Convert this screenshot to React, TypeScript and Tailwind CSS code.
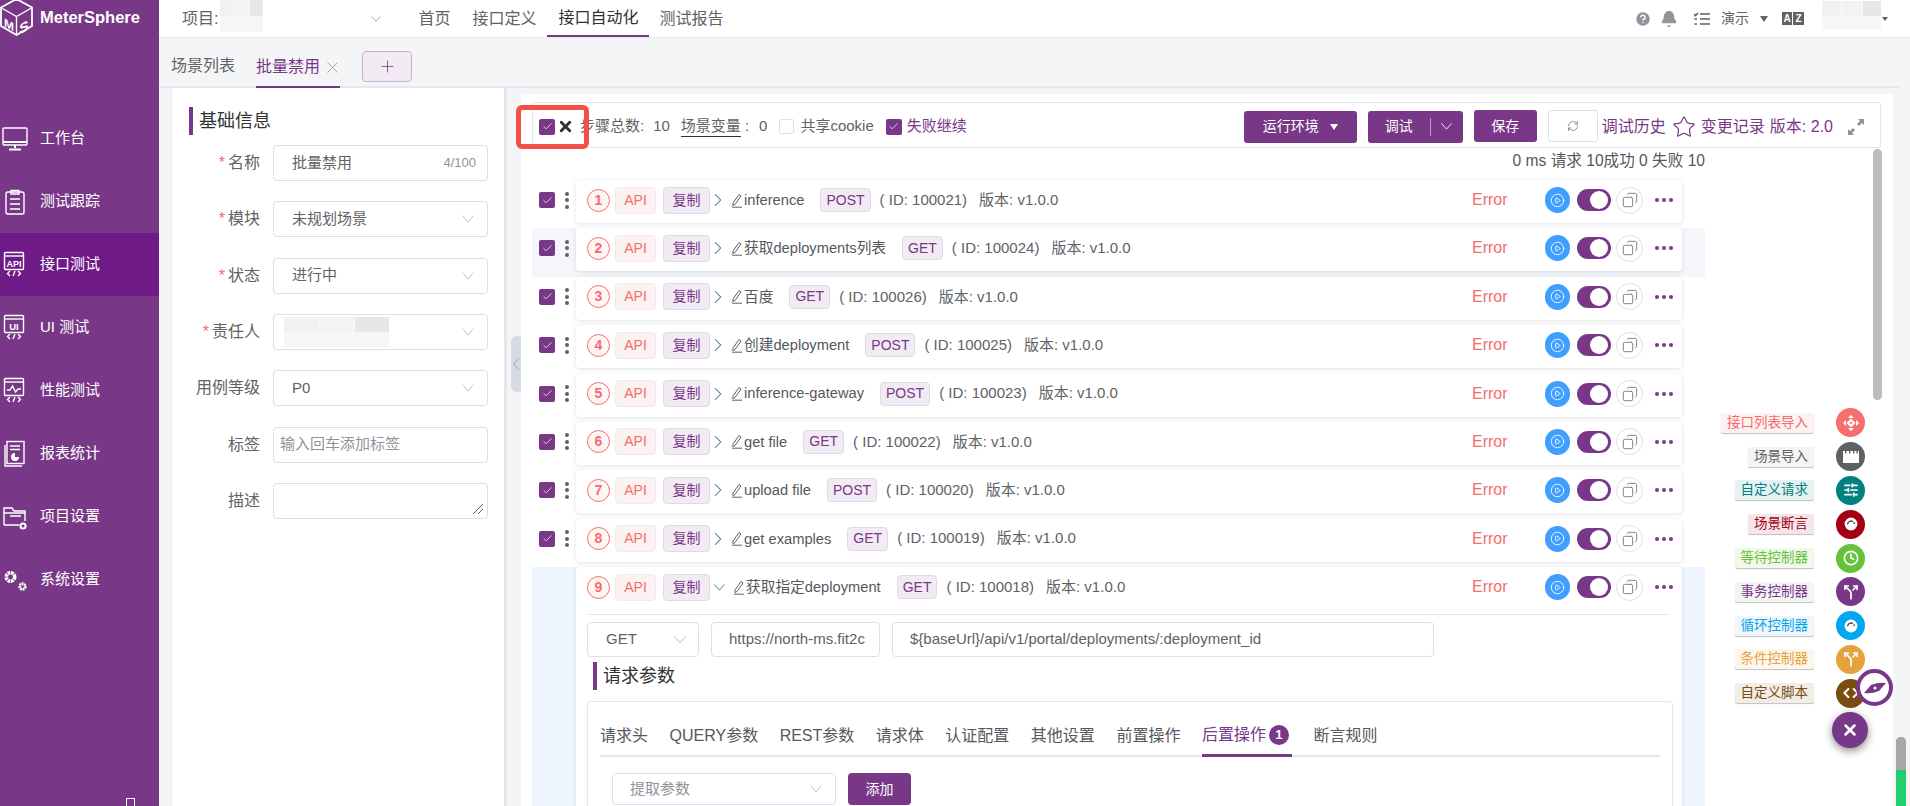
import React from "react";
import {
  Bell,
  Check,
  ChevronLeft,
  ChevronRight,
  CircleHelp,
  CirclePlay,
  Clock,
  Code,
  Copy,
  Plus,
  RefreshCw,
  SlidersHorizontal,
  Split,
  Star,
  X,
} from "lucide-react";

const navItems = [
  { label: "工作台", icon: "monitor" },
  { label: "测试跟踪", icon: "track" },
  { label: "接口测试", icon: "api", active: true },
  { label: "UI 测试", icon: "ui" },
  { label: "性能测试", icon: "perf" },
  { label: "报表统计", icon: "report" },
  { label: "项目设置", icon: "folder" },
  { label: "系统设置", icon: "gears" },
];

const steps = [
  { no: 1, name: "inference", method: "POST", id: "100021" },
  { no: 2, name: "获取deployments列表", method: "GET", id: "100024", hover: true },
  { no: 3, name: "百度", method: "GET", id: "100026" },
  { no: 4, name: "创建deployment", method: "POST", id: "100025" },
  { no: 5, name: "inference-gateway", method: "POST", id: "100023" },
  { no: 6, name: "get file", method: "GET", id: "100022" },
  { no: 7, name: "upload file", method: "POST", id: "100020" },
  { no: 8, name: "get examples", method: "GET", id: "100019" },
];

const requestTabs = ["请求头", "QUERY参数", "REST参数", "请求体", "认证配置", "其他设置", "前置操作"];

const floatActions = [
  { label: "接口列表导入", text: "text-[#f56c6c]", bg: "bg-[#fdf2f2]", circle: "bg-[#f76e6e]", icon: "move" },
  { label: "场景导入", text: "text-[#606266]", bg: "bg-[#f4f4f5]", circle: "bg-[#5f6064]", icon: "film" },
  { label: "自定义请求", text: "text-[#008080]", bg: "bg-[#e6f2f2]", circle: "bg-[#008080]", icon: "sliders" },
  { label: "场景断言", text: "text-[#a30014]", bg: "bg-[#f6e5e7]", circle: "bg-[#a30014]", icon: "gauge" },
  { label: "等待控制器", text: "text-[#67c23a]", bg: "bg-[#f0f9eb]", circle: "bg-[#67c23a]", icon: "clock" },
  { label: "事务控制器", text: "text-[#783887]", bg: "bg-[#f4f4f5]", circle: "bg-[#783887]", icon: "split" },
  { label: "循环控制器", text: "text-[#02a7f0]", bg: "bg-[#f2f6fa]", circle: "bg-[#02a7f0]", icon: "gauge" },
  { label: "条件控制器", text: "text-[#e6a23c]", bg: "bg-[#fdf6ec]", circle: "bg-[#e6a23c]", icon: "split" },
  { label: "自定义脚本", text: "text-[#7b4d12]", bg: "bg-[#f2ede7]", circle: "bg-[#7b4d12]", icon: "code" },
];

function NavIcon({ name }: { name: string }) {
  const frame = (
    <>
      <rect x="2.5" y="1.5" width="19" height="17" rx="1" />
      <path d="M2.5 5h19" />
      <path d="M8 25l-2.5-2.5L8 20M16 25l2.5-2.5L16 20M13 20l-2 5" />
    </>
  );
  return (
    <svg viewBox="0 0 26 28" fill="none" stroke="white" strokeWidth="1.4" className="w-[26px] h-[28px]">
      {name === "monitor" && (
        <>
          <rect x="1" y="3" width="24" height="17" rx="1" />
          <path d="M1 17h24M13 20v3M7 24.5h12" strokeWidth="2" />
        </>
      )}
      {name === "track" && (
        <>
          <rect x="4" y="4" width="18" height="22" rx="2" />
          <path d="M9 2.5h8v3.5H9zM8 11h10M8 16h10M8 21h10" />
        </>
      )}
      {name === "api" && (
        <>
          {frame}
          <text x="12" y="15.5" textAnchor="middle" fill="white" stroke="none" fontSize="9" fontWeight="700">API</text>
        </>
      )}
      {name === "ui" && (
        <>
          {frame}
          <text x="12" y="15.5" textAnchor="middle" fill="white" stroke="none" fontSize="9.5" fontWeight="700">UI</text>
        </>
      )}
      {name === "perf" && (
        <>
          {frame}
          <path d="M5 13l3 0 2.5-4 3 6 2.5-3 3 0" />
        </>
      )}
      {name === "report" && (
        <>
          <rect x="5" y="1.5" width="17" height="22" />
          <path d="M3 5v21h17M8 6h10M8 9.5h10" />
          <path d="M13 13a4 4 0 1 0 4 4h-4z" fill="white" stroke="none" />
        </>
      )}
      {name === "folder" && (
        <>
          <path d="M2 22V5h8l2 3h11v10M2 22h15" />
          <path d="M8 13h11M2 10h21" />
          <circle cx="21" cy="23" r="2.6" strokeWidth="2" />
        </>
      )}
      {name === "gears" && (
        <>
          <circle cx="8.5" cy="11" r="4.2" strokeWidth="3.6" strokeDasharray="2.6 0.7" />
          <circle cx="20.5" cy="20.5" r="2.8" strokeWidth="2.8" strokeDasharray="1.8 0.6" />
        </>
      )}
    </svg>
  );
}

function Logo() {
  return (
    <svg viewBox="0 0 33 36" className="w-[33px] h-[36px]" fill="none" stroke="white">
      <path d="M16.5 -1L32 7.5V26L16.5 35L1 26V7.5Z" strokeWidth="1.8" />
      <path d="M1.5 8l15 8.5L31.5 8M16.5 16.5V34" strokeWidth="1.4" />
      <text x="0" y="0" transform="translate(9 29) skewY(28)" textAnchor="middle" fill="white" stroke="none" fontSize="12" fontWeight="700">M</text>
      <text x="0" y="0" transform="translate(24 32) skewY(-28)" textAnchor="middle" fill="white" stroke="none" fontSize="14" fontWeight="700">S</text>
    </svg>
  );
}

function Caret({ className = "w-[12px] h-[8px]", stroke = "#c0c4cc" }: { className?: string; stroke?: string }) {
  return (
    <svg viewBox="0 0 12 8" className={`shrink-0 ${className}`} fill="none" stroke={stroke} strokeWidth="1" preserveAspectRatio="none">
      <path d="M0.5 0.5L6 7L11.5 0.5" />
    </svg>
  );
}

function CheckMark() {
  return (
    <span className="w-[16px] h-[16px] rounded-[2px] bg-[#783887] flex items-center justify-center shrink-0">
      <Check className="w-[11px] h-[11px] text-white" strokeWidth={1.6} />
    </span>
  );
}

function Kebab() {
  return (
    <span className="flex flex-col gap-[2.5px] w-[4px] shrink-0">
      <span className="w-[4px] h-[4px] rounded-full bg-[#606266]" />
      <span className="w-[4px] h-[4px] rounded-full bg-[#606266]" />
      <span className="w-[4px] h-[4px] rounded-full bg-[#606266]" />
    </span>
  );
}

function PencilMark() {
  return (
    <svg viewBox="0 0 12 15" fill="none" stroke="#606266" strokeWidth="1" className="w-[12px] h-[15px] shrink-0">
      <path d="M2 10L8 1.5l2 1.5-6 8.5-2.2 1zM1 14.2h10" />
    </svg>
  );
}

function Tag({ children, className }: { children: React.ReactNode; className: string }) {
  return (
    <span className={`flex items-center justify-center rounded-[4px] border shrink-0 ${className}`}>{children}</span>
  );
}

function StepHead({ no, name, method, id, open }: { no: number; name: string; method: string; id: string; open?: boolean }) {
  return (
    <div className="h-[40px] flex items-center pl-[11px] pr-[9px]">
      <span className="w-[23px] h-[23px] rounded-full border border-[#f56c6c] bg-[#fef5f5] text-[#f56c6c] text-[14px] font-bold flex items-center justify-center shrink-0">
        {no}
      </span>
      <Tag className="ml-[5px] w-[41px] h-[27px] border-[#f1e9f0] bg-[#fdf2f2] text-[#f56c6c] text-[14px]">API</Tag>
      <Tag className="ml-[7px] w-[47px] h-[27px] border-[#e4d7e7] bg-[#f2ebf3] text-[#783887] text-[14px]">复制</Tag>
      {open ? (
        <span className="w-[19px] pl-[4px] shrink-0 flex">
          <Caret className="w-[11px] h-[7px]" stroke="#606266" />
        </span>
      ) : (
        <ChevronRight className="-ml-[3px] -mr-[2px] w-[22px] h-[22px] shrink-0 text-[#606266]" strokeWidth={1.1} />
      )}
      <span className="ml-[4px]">
        <PencilMark />
      </span>
      <span className="ml-[1px] text-[14.7px] text-[#55585e] whitespace-nowrap">{name}</span>
      <Tag className="ml-[16px] px-[5px] h-[24px] border-[#e4d7e7] bg-[#f2ebf3] text-[#783887] text-[14px]">{method}</Tag>
      <span className="ml-[9px] text-[15px] text-[#606266] whitespace-nowrap">( ID: {id})</span>
      <span className="ml-[12px] text-[15px] text-[#606266] whitespace-nowrap">版本: v1.0.0</span>
      <span className="ml-auto w-[73px] text-[16px] text-[#f56c6c]">Error</span>
      <span className="w-[25px] h-[26px] rounded-full bg-[#409eff] flex items-center justify-center shrink-0">
        <CirclePlay className="w-[15px] h-[15px] text-white" strokeWidth={1.4} />
      </span>
      <span className="ml-[7px] w-[34px] h-[22px] rounded-full bg-[#783887] flex items-center justify-end pr-[3px] shrink-0">
        <span className="w-[18px] h-[18px] rounded-full bg-white" />
      </span>
      <span className="ml-[5px] w-[27px] h-[27px] rounded-full border border-[#dcdfe6] flex items-center justify-center shrink-0">
        <Copy className="w-[16px] h-[16px] text-[#6f7175] -scale-x-100" strokeWidth={1.3} />
      </span>
      <span className="ml-[12px] flex gap-[3px] shrink-0">
        <span className="w-[4px] h-[4px] rounded-full bg-[#783887]" />
        <span className="w-[4px] h-[4px] rounded-full bg-[#783887]" />
        <span className="w-[4px] h-[4px] rounded-full bg-[#783887]" />
      </span>
    </div>
  );
}

function StepRow({ step }: { step: (typeof steps)[number] }) {
  return (
    <div className={`w-[1173px] h-[48.375px] flex ${step.hover ? "bg-[#f4f6fb]" : ""}`}>
      <div className="h-[40px] flex items-center pl-[7px] w-[44px] gap-[10px] shrink-0">
        <CheckMark />
        <Kebab />
      </div>
      <div className="w-[1106px] h-[43px] bg-white rounded-[4px] shadow-[0_1px_4px_rgba(0,0,0,0.12)]">
        <StepHead {...step} />
      </div>
    </div>
  );
}

function FloatIcon({ name }: { name: string }) {
  const cls = "w-[16px] h-[16px] text-white";
  if (name === "sliders") return <SlidersHorizontal className={cls} strokeWidth={2.6} />;
  if (name === "clock") return <Clock className={cls} strokeWidth={2.4} />;
  if (name === "split") return <Split className={cls} strokeWidth={2.6} />;
  if (name === "code") return <Code className={cls} strokeWidth={3} />;
  if (name === "move")
    return (
      <svg viewBox="0 0 16 16" className="w-[16px] h-[16px]" fill="white">
        <path d="M8 0l3 3H5zM8 16l-3-3h6zM0 8l3-3v6zM16 8l-3 3V5zM8 3.4L12.6 8 8 12.6 3.4 8zM8 6.6L6.6 8 8 9.4 9.4 8z" fillRule="evenodd" />
      </svg>
    );
  if (name === "film")
    return (
      <svg viewBox="0 0 16 14" className="w-[16px] h-[14px]" fill="white">
        <path d="M0 1h16v12H0zM2 1v2.4h1.4V1zM6 1v2.4h1.4V1zM10 1v2.4h1.4V1zM13.4 1v2.4h1.4V1z" fillRule="evenodd" />
      </svg>
    );
  return (
    <svg viewBox="0 0 14 14" className="w-[14px] h-[14px]" fill="none">
      <circle cx="7" cy="7" r="6.4" fill="white" />
      <path d="M3.5 7.4A3.6 3.6 0 0 1 9 4.6" stroke="#000" strokeOpacity="0.7" strokeWidth="1.3" />
      <circle cx="10.2" cy="6.2" r="0.9" fill="#000" fillOpacity="0.7" />
    </svg>
  );
}

function FormRow({ label, required, children }: { label: string; required?: boolean; children: React.ReactNode }) {
  return (
    <div className="h-[36px] mb-[20.33px] flex items-center">
      <label className="w-[89px] text-right text-[16px] text-[#606266] whitespace-nowrap">
        {required && <span className="text-[#f56c6c] mr-[3px]">*</span>}
        {label}
      </label>
      <div className="ml-[13px] w-[215px] h-[36px]">{children}</div>
    </div>
  );
}

function Field({ children, className = "" }: { children?: React.ReactNode; className?: string }) {
  return (
    <div className={`h-full rounded-[4px] border border-[#dcdfe6] bg-white flex items-center text-[15px] text-[#606266] ${className}`}>
      {children}
    </div>
  );
}

function SelectField({ value }: { value?: string }) {
  return (
    <Field className="pl-[18px] pr-[13px] justify-between">
      <span>{value}</span>
      <Caret />
    </Field>
  );
}

function PurpleHeading({ children }: { children: React.ReactNode }) {
  return (
    <div className="flex items-center gap-[6px]">
      <span className="w-[4px] h-[28px] bg-[#783887]" />
      <span className="text-[18px] text-[#303133]">{children}</span>
    </div>
  );
}

function Blurred({ className }: { className: string }) {
  return (
    <div className={`flex flex-col bg-[#f6f6f6] ${className}`}>
      <div className="flex-1 flex gap-[2px]">
        <div className="w-1/3 bg-[#f1f1f1]" />
        <div className="w-1/3 bg-[#f3f3f3]" />
        <div className="w-1/3 bg-[#e7e7e7]" />
      </div>
      <div className="flex-1" />
    </div>
  );
}

export default function App() {
  return (
    <div className="relative flex h-[806px] w-[1910px] overflow-hidden bg-[#f4f5f7] [font-family:'Liberation_Sans','Noto_Sans_CJK_SC',sans-serif]">
      <aside className="relative w-[159px] shrink-0 bg-[#783887] text-white">
        <div className="h-[107px] flex items-start">
          <Logo />
          <span className="ml-[7px] mt-[7px] text-[16.5px] font-bold leading-[20px]">MeterSphere</span>
        </div>
        {navItems.map((item) => (
          <div key={item.label} className={`h-[63px] flex items-center pl-[2px] ${item.active ? "bg-[#6e1a87]" : ""}`}>
            <NavIcon name={item.icon} />
            <span className="ml-[12px] text-[15px]">{item.label}</span>
          </div>
        ))}
        <span className="absolute left-[126px] bottom-0 w-[9px] h-[8px] border-x border-t border-white" />
      </aside>

      <div className="flex-1 min-w-0 flex flex-col">
        <header className="h-[38px] shrink-0 bg-white border-b border-[#e4e7ed] flex items-center">
          <span className="ml-[23px] text-[16px] text-[#606266]">项目:</span>
          <Blurred className="ml-[2px] w-[43px] h-[32px] -mt-[6px]" />
          <span className="ml-[108px]">
            <Caret className="w-[10px] h-[6px]" stroke="#909399" />
          </span>
          <nav className="ml-[26px] flex h-full text-[16px] text-[#606266]">
            <span className="px-[11px] flex items-center">首页</span>
            <span className="px-[11px] flex items-center">接口定义</span>
            <span className="pl-[11px] pr-[10px] flex items-center text-[#303133] border-b-2 border-[#783887]">接口自动化</span>
            <span className="px-[11px] flex items-center">测试报告</span>
          </nav>
          <div className="ml-auto flex items-center text-[#606266]">
            <CircleHelp className="w-[18px] h-[18px] fill-[#909399] text-white" strokeWidth={2} />
            <Bell className="ml-[8px] w-[18px] h-[18px] fill-[#909399] text-[#909399]" strokeWidth={1.5} />
            <svg viewBox="0 0 16 16" className="ml-[16px] w-[16px] h-[16px]" fill="none" stroke="#606266" strokeWidth="1.6">
              <path d="M6 3h10M6 8h10M6 13h10M0 3l1.5 1.5L4 2M0.5 8h2.5M0.5 13h2.5" />
            </svg>
            <span className="ml-[11px] text-[14px]">演示</span>
            <span className="ml-[11px] w-0 h-0 border-x-[4px] border-x-transparent border-t-[6px] border-t-[#606266]" />
            <span className="ml-[14px] w-[22px] h-[13px] flex text-[10px] leading-[13px] font-bold text-white">
              <span className="w-[10px] bg-[#606266] text-center">A</span>
              <span className="ml-[1px] w-[11px] bg-[#606266] text-center">Z</span>
            </span>
            <Blurred className="ml-[18px] w-[59px] h-[29px] -mt-[6px]" />
            <span className="ml-[1px] mr-[22px] w-0 h-0 border-x-[3px] border-x-transparent border-t-[4px] border-t-[#606266]" />
          </div>
        </header>

        <div className="h-[50px] shrink-0 flex items-end border-b-2 border-[#e4e7ed] mr-[10px]">
          <span className="ml-[12px] h-[40px] flex items-center text-[16px] text-[#606266]">场景列表</span>
          <span className="ml-[21px] w-[84px] h-[40px] flex items-center text-[16px] text-[#783887] whitespace-nowrap border-b-2 border-[#783887] -mb-[2px]">
            批量禁用
            <X className="ml-[3px] -mr-[3px] w-[19px] h-[19px] shrink-0 text-[#909399]" strokeWidth={1} />
          </span>
          <span className="ml-[22px] mb-[4px] w-[50px] h-[31px] rounded-[4px] border border-[#c9afcf] bg-[#f2ebf3] flex items-center justify-center">
            <Plus className="w-[19px] h-[19px] text-[#783887]" strokeWidth={1} />
          </span>
        </div>

        <div className="flex-1 min-h-0 flex">
          <section className="ml-[12px] w-[336px] shrink-0 bg-white border-l border-l-[#eef0f3] border-r-[3px] border-r-[#e4e7ed] pl-[17px] pt-[19px]">
            <PurpleHeading>基础信息</PurpleHeading>
            <div className="mt-[10px] -ml-[18px]">
              <FormRow label="名称" required>
                <Field className="pl-[18px] pr-[11px] justify-between">
                  <span>批量禁用</span>
                  <span className="text-[13px] text-[#909399]">4/100</span>
                </Field>
              </FormRow>
              <FormRow label="模块" required>
                <SelectField value="未规划场景" />
              </FormRow>
              <FormRow label="状态" required>
                <SelectField value="进行中" />
              </FormRow>
              <FormRow label="责任人" required>
                <Field className="pl-[10px] pr-[13px] justify-between">
                  <Blurred className="w-[105px] h-[30px]" />
                  <Caret />
                </Field>
              </FormRow>
              <FormRow label="用例等级">
                <SelectField value="P0" />
              </FormRow>
              <FormRow label="标签">
                <Field className="pl-[6px] text-[14px] text-[#909399]">输入回车添加标签</Field>
              </FormRow>
              <FormRow label="描述">
                <Field className="relative">
                  <svg viewBox="0 0 12 12" className="absolute right-[3px] bottom-[3px] w-[12px] h-[12px]" stroke="#606266" strokeWidth="1">
                    <path d="M1 11L11 1M6 11l5-5" />
                  </svg>
                </Field>
              </FormRow>
            </div>
          </section>

          <div className="w-[14px] shrink-0 pl-[4px] pt-[248px]">
            <div className="w-[10px] h-[56px] rounded-l-[6px] bg-[#d5dbe0] flex items-center justify-center">
              <ChevronLeft className="w-[20px] h-[20px] shrink-0 text-[#909399]" strokeWidth={1} />
            </div>
          </div>

          <main className="relative mt-[6px] w-[1372px] shrink-0 bg-white pl-[11px] pr-[12px] pt-[8px]">
            <div className="h-[46px] pt-[3px] rounded-[2px] border border-[#e4e7ed] flex items-center text-[15px] text-[#606266]">
              <span className="ml-[6px]">
                <CheckMark />
              </span>
              <X className="ml-[2px] w-[17px] h-[17px] shrink-0 text-[#303133]" strokeWidth={4} />
              <span className="ml-[6px] whitespace-nowrap">步骤总数:</span>
              <span className="ml-[9px]">10</span>
              <span className="ml-[11px] border-b border-[#303133] leading-[20px]">场景变量</span>
              <span className="ml-[4px]">:</span>
              <span className="ml-[10px]">0</span>
              <span className="ml-[12px] w-[15px] h-[15px] rounded-[2px] border border-[#dcdfe6] shrink-0" />
              <span className="ml-[6px]">共享cookie</span>
              <span className="ml-[12px]">
                <CheckMark />
              </span>
              <span className="ml-[5px] text-[#783887]">失败继续</span>

              <div className="ml-auto flex items-center">
                <span className="w-[113px] h-[32px] rounded-[3px] bg-[#783887] text-white text-[14px] flex items-center justify-center gap-[11px]">
                  运行环境
                  <span className="w-0 h-0 border-x-[4.5px] border-x-transparent border-t-[6px] border-t-white" />
                </span>
                <span className="ml-[11px] w-[95px] h-[32px] rounded-[3px] bg-[#783887] text-white text-[14px] flex items-center">
                  <span className="w-[62px] text-center">调试</span>
                  <span className="h-[18px] border-l border-[#bb9cc3]" />
                  <span className="ml-[10px]">
                    <Caret className="w-[11px] h-[7px]" stroke="#ffffff" />
                  </span>
                </span>
                <span className="ml-[11px] -mt-[1px] w-[63px] h-[32px] rounded-[3px] bg-[#783887] text-white text-[14px] flex items-center justify-center">
                  保存
                </span>
                <span className="ml-[11px] -mt-[1px] w-[50px] h-[32px] rounded-[3px] border border-[#dcdfe6] flex items-center justify-center">
                  <RefreshCw className="w-[12px] h-[12px] text-[#606266]" strokeWidth={1.3} />
                </span>
                <span className="ml-[4px] text-[16px] text-[#783887] whitespace-nowrap">调试历史</span>
                <Star className="ml-[6px] w-[24px] h-[24px] text-[#783887]" strokeWidth={1.2} />
                <span className="ml-[5px] text-[16px] text-[#783887] whitespace-nowrap">变更记录</span>
                <span className="ml-[5px] text-[16px] text-[#783887] whitespace-nowrap">版本: 2.0</span>
                <svg viewBox="0 0 16 16" className="ml-[15px] mr-[16px] w-[16px] h-[16px]" fill="#909399">
                  <path d="M16 0v6l-2-2-3 3-2-2 3-3-2-2zM0 16v-6l2 2 3-3 2 2-3 3 2 2z" />
                </svg>
              </div>
            </div>

            <div className="w-[1173px] h-[32px] pb-[6px] flex items-center justify-end text-[15.6px] text-[#55585e]">
              0 ms 请求 10成功 0 失败 10
            </div>

            {steps.map((step) => (
              <StepRow key={step.no} step={step} />
            ))}

            <div className="w-[1173px] h-[300px] flex bg-[#eef5fe]">
              <div className="h-[40px] w-[44px] shrink-0" />
              <div className="w-[1106px] bg-white rounded-[4px] shadow-[0_1px_4px_rgba(0,0,0,0.12)]">
                <StepHead no={9} name="获取指定deployment" method="GET" id="100018" open />
                <div className="mx-[11px] mr-[12px] mt-[7px] border-t border-[#e4e7ed]" />
                <div className="ml-[11px] mt-[7px] h-[35px] flex gap-[12px]">
                  <Field className="w-[112px] pl-[18px] pr-[12px] justify-between">
                    <span>GET</span>
                    <Caret />
                  </Field>
                  <Field className="w-[169px] pl-[17px] text-[13.7px]">https://north-ms.fit2c</Field>
                  <Field className="w-[542px] pl-[17px] text-[13.7px]">{"${baseUrl}/api/v1/portal/deployments/:deployment_id"}</Field>
                </div>
                <div className="ml-[17px] mt-[5px]">
                  <PurpleHeading>请求参数</PurpleHeading>
                </div>
                <div className="ml-[11px] mr-[9px] mt-[11px] h-[120px] rounded-t-[4px] border border-[#e4e7ed] border-b-0 px-[12px]">
                  <div className="mt-[14px] h-[41px] flex items-center gap-[21.5px] border-b-2 border-[#e4e7ed] text-[16px] text-[#55585e]">
                    {requestTabs.map((tab) => (
                      <span key={tab} className="whitespace-nowrap">{tab}</span>
                    ))}
                    <span className="h-[41px] w-[90px] -mb-[2px] border-b-[3px] border-[#783887] text-[#783887] flex items-center gap-[3px] whitespace-nowrap">
                      后置操作
                      <span className="w-[20px] h-[20px] rounded-full bg-[#783887] text-white text-[13px] font-bold flex items-center justify-center">1</span>
                    </span>
                    <span className="whitespace-nowrap">断言规则</span>
                  </div>
                  <div className="mt-[16px] ml-[12px] flex gap-[12px]">
                    <div className="w-[224px] h-[32px]">
                      <Field className="pl-[17px] pr-[13px] justify-between text-[14px] text-[#909399]">
                        <span>提取参数</span>
                        <Caret />
                      </Field>
                    </div>
                    <span className="w-[63px] h-[32px] rounded-[4px] bg-[#783887] text-white text-[14px] flex items-center justify-center">添加</span>
                  </div>
                </div>
              </div>
            </div>

            <span className="absolute left-[1352px] top-[55px] w-[9px] h-[251px] rounded-full bg-[#bcbcbc]" />

            <div className="absolute -left-[5px] top-[11px] w-[73px] h-[44px] rounded-[6px] border-[5px] border-[#f4504a]" />

            <div className="absolute top-[312px] right-[28px] flex flex-col">
              {floatActions.map((a) => (
                <div key={a.label} className="h-[33.8px] flex items-center justify-end gap-[22px]">
                  <span className={`h-[20px] px-[6px] rounded-[2px] shadow-[0_1px_1px_rgba(0,0,0,0.25)] text-[13.5px] flex items-center whitespace-nowrap ${a.text} ${a.bg}`}>
                    {a.label}
                  </span>
                  <span className={`w-[29px] h-[29px] rounded-full flex items-center justify-center ${a.circle}`}>
                    <FloatIcon name={a.icon} />
                  </span>
                </div>
              ))}
            </div>
            <span className="absolute top-[618px] right-[25px] w-[36px] h-[36px] rounded-full bg-[#783887] shadow-[0_3px_8px_rgba(0,0,0,0.45)] flex items-center justify-center">
              <X className="w-[18px] h-[18px] text-white" strokeWidth={3.4} />
            </span>
            <span className="absolute top-[575px] right-0 w-[37px] h-[37px] rounded-full border-[4px] border-[#783887] bg-white flex items-center justify-center">
              <svg viewBox="0 0 22 12" className="w-[22px] h-[12px] shrink-0" fill="#783887">
                <path d="M22 1L15 9Q8 12 0 11L7 3Q14 0 22 1zM11 4.5a1.5 1.5 0 1 0 0 3 1.5 1.5 0 0 0 0-3z" fillRule="evenodd" />
              </svg>
            </span>
          </main>
        </div>
      </div>

      <div className="absolute right-[4px] top-[737px] bottom-0 w-[10px] rounded-t-[5px] bg-[#22cf6d] overflow-hidden">
        <div className="h-[33px] bg-[#a9a9a9]" />
      </div>
    </div>
  );
}
